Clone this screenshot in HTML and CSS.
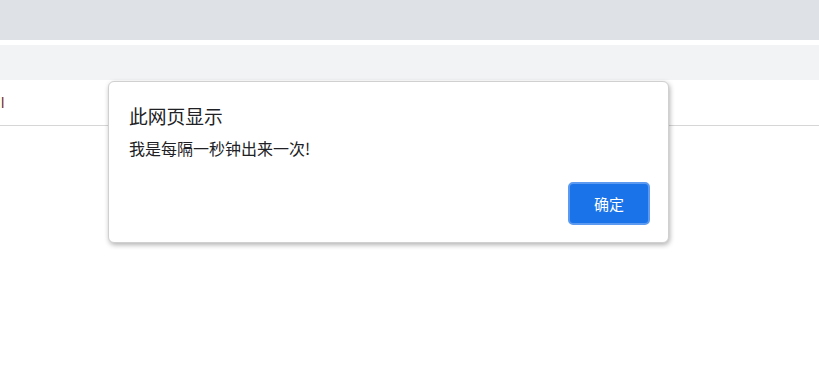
FILE: index.html
```html
<!DOCTYPE html>
<html lang="zh-CN">
<head>
    <meta charset="UTF-8">
    <meta name="viewport" content="width=device-width, initial-scale=1.0">
    <title>定时弹窗</title>
    <link rel="stylesheet" href="styles.css">
</head>
<body>
    <div class="tab-strip"></div>
    <div class="tool-strip"></div>

    <div class="page">
        <div class="row"><span class="mark">l</span></div>
    </div>

    <div class="dialog">
        <div class="dialog-title">此网页显示</div>
        <div class="dialog-message">我是每隔一秒钟出来一次!</div>
        <div class="dialog-actions">
            <button class="dialog-button">确定</button>
        </div>
    </div>
</body>
</html>
```

FILE: styles.css
```css
body {
    margin: 0;
    padding: 0;
    background: #ffffff;
    font-family: "Noto Sans CJK SC", "Noto Sans", Arial, sans-serif;
}
.tab-strip {
    height: 40px;
    background: #dee1e6;
    border-bottom: 5px solid #ffffff;
}
.tool-strip {
    height: 35px;
    background: #f1f3f4;
}
.row {
    height: 45px;
    border-bottom: 1px solid #d6d6d6;
    display: flex;
    align-items: center;
}
.mark {
    margin-left: 1px;
    color: #7a2e2a;
    font-family: "Liberation Sans", Arial, sans-serif;
    font-size: 15px;
}
.dialog {
    position: absolute;
    top: 81px;
    left: 108px;
    width: 561px;
    height: 162px;
    background: #ffffff;
    border: 1px solid #d0d0d0;
    border-radius: 6px;
    box-shadow: 1px 2px 5px rgba(0, 0, 0, 0.3);
    padding: 0 18px 0 20px;
    box-sizing: border-box;
    display: flex;
    flex-direction: column;
}
.dialog-title {
    margin-top: 22px;
    font-size: 18.75px;
    line-height: 24px;
    color: #202124;
}
.dialog-message {
    margin-top: 10px;
    font-size: 16px;
    line-height: 20px;
    color: #202124;
}
.dialog-actions {
    margin-top: auto;
    margin-bottom: 17px;
    display: flex;
    justify-content: flex-end;
}
.dialog-button {
    width: 82px;
    height: 43px;
    background: #1a73e8;
    color: #ffffff;
    border: 2px solid #5b9af0;
    border-radius: 5px;
    font-family: "Noto Sans CJK SC", sans-serif;
    font-size: 15px;
    padding: 0;
}
```
